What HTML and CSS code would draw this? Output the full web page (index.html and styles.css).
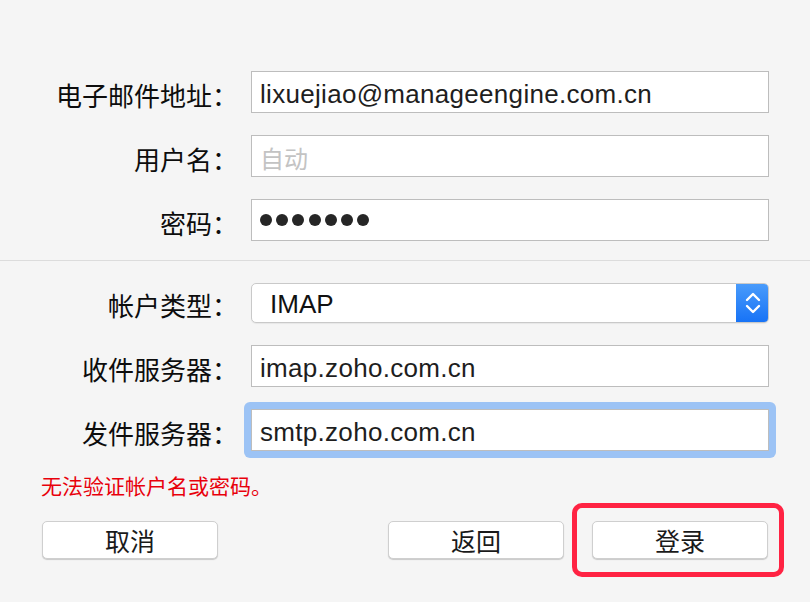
FILE: index.html
```html
<!DOCTYPE html>
<html lang="zh-CN">
<head>
    <meta charset="UTF-8">
    <meta name="viewport" content="width=device-width, initial-scale=1.0">
    <title>添加邮件帐户</title>
    <link rel="stylesheet" href="styles.css">
</head>
<body>
    <div class="sheet">
        <div class="form-group">
            <div class="row">
                <span class="label">电子邮件地址：</span>
                <div class="field">lixuejiao@manageengine.com.cn</div>
            </div>
            <div class="row">
                <span class="label">用户名：</span>
                <div class="field placeholder">自动</div>
            </div>
            <div class="row">
                <span class="label">密码：</span>
                <div class="field password">
                    <span class="dot"></span><span class="dot"></span><span class="dot"></span><span class="dot"></span><span class="dot"></span><span class="dot"></span><span class="dot"></span>
                </div>
            </div>
        </div>

        <hr class="divider">

        <div class="form-group">
            <div class="row">
                <span class="label">帐户类型：</span>
                <div class="select">
                    <span class="select-value">IMAP</span>
                    <span class="stepper">
                        <svg width="16" height="24" viewBox="0 0 16 24">
                            <path d="M2 9 L8 3 L14 9" fill="none" stroke="#fff" stroke-width="2.4" stroke-linecap="round" stroke-linejoin="round"/>
                            <path d="M2 15 L8 21 L14 15" fill="none" stroke="#fff" stroke-width="2.4" stroke-linecap="round" stroke-linejoin="round"/>
                        </svg>
                    </span>
                </div>
            </div>
            <div class="row">
                <span class="label">收件服务器：</span>
                <div class="field">imap.zoho.com.cn</div>
            </div>
            <div class="row">
                <span class="label">发件服务器：</span>
                <div class="focus-ring">
                    <div class="field">smtp.zoho.com.cn</div>
                </div>
            </div>
        </div>

        <p class="error">无法验证帐户名或密码。</p>

        <div class="buttons">
            <button class="btn">取消</button>
            <div class="spacer"></div>
            <button class="btn">返回</button>
            <div class="highlight">
                <button class="btn">登录</button>
            </div>
        </div>
    </div>
</body>
</html>
```

FILE: styles.css
```css
body {
    margin: 0;
    background-color: #f5f5f5;
    color: #111;
    font-family: "Liberation Sans", "Noto Sans CJK SC", sans-serif;
}
.sheet {
    width: 810px;
    height: 602px;
    padding-top: 71px;
    box-sizing: border-box;
    overflow: hidden;
}
.form-group {
    display: flex;
    flex-direction: column;
    gap: 22px;
    padding-right: 41px;
}
.row {
    display: grid;
    grid-template-columns: 226px 1fr;
    column-gap: 25px;
    align-items: center;
}
.label {
    font-family: "Noto Sans CJK SC", sans-serif;
    font-size: 26px;
    text-align: right;
    margin-right: -12px;
    padding-top: 4px;
    color: #0d0d0d;
}
.field {
    height: 42px;
    box-sizing: border-box;
    border: 1px solid #bdbdbd;
    background: #fff;
    font-size: 26px;
    letter-spacing: 0.3px;
    line-height: 40px;
    padding: 2px 8px 0;
    color: #1e1e1e;
    white-space: nowrap;
}
.field.placeholder {
    font-family: "Noto Sans CJK SC", sans-serif;
    font-size: 24px;
    letter-spacing: 0;
    color: #c3c3c3;
}
.field.password {
    display: flex;
    align-items: center;
    gap: 4.2px;
    padding-top: 0;
}
.dot {
    width: 12px;
    height: 12px;
    border-radius: 50%;
    background: #262626;
}
.divider {
    margin: 19px 0 21px;
    border: 0;
    border-top: 1px solid #dcdcdc;
}
.select {
    height: 40px;
    box-sizing: border-box;
    border: 1px solid #c9c9c9;
    border-radius: 5px;
    background: #fff;
    display: flex;
    align-items: stretch;
    overflow: hidden;
    box-shadow: 0 1px 1px rgba(0, 0, 0, 0.06);
}
.select-value {
    flex: 1;
    font-size: 26px;
    line-height: 38px;
    padding: 1px 18px 0;
}
.stepper {
    width: 33px;
    margin: -1px -1px -1px 0;
    background: linear-gradient(#4a9cfb, #1672f6);
    display: flex;
    align-items: center;
    justify-content: center;
}
.focus-ring {
    margin: -7px;
    padding: 7px;
    border-radius: 6px;
    background: #9cc3f5;
}
.error {
    margin: 22px 0 0 41px;
    font-family: "Noto Sans CJK SC", sans-serif;
    font-size: 21px;
    line-height: 24px;
    color: #e8000b;
}
.buttons {
    display: flex;
    align-items: center;
    margin-top: 24px;
    padding: 0 42px;
}
.spacer {
    flex: 1;
}
.btn {
    width: 176px;
    height: 38px;
    box-sizing: border-box;
    border: 1px solid #cfcfcf;
    border-radius: 5px;
    background: #fff;
    box-shadow: 0 1px 1px rgba(0, 0, 0, 0.18);
    font-family: "Noto Sans CJK SC", sans-serif;
    font-size: 25px;
    line-height: 34px;
    color: #1a1a1a;
    padding: 0;
}
.highlight {
    margin: -18px -16px -18px 8px;
    padding: 13px 11px 13px 15px;
    border: 5px solid #ff2343;
    border-radius: 10px;
}
```
